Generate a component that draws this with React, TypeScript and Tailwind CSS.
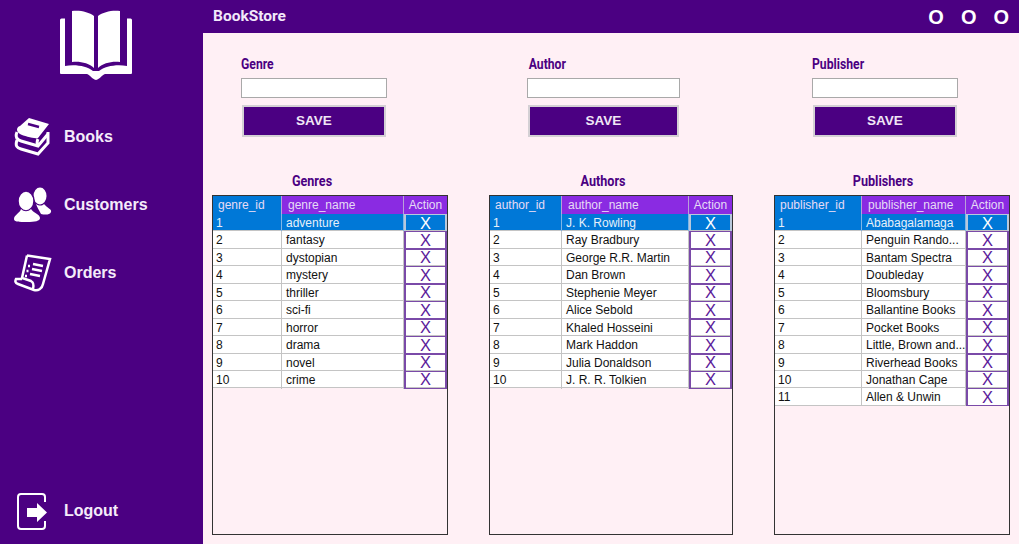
import { useState } from "react";

const genres = ["adventure", "fantasy", "dystopian", "mystery", "thriller", "sci-fi", "horror", "drama", "novel", "crime"];
const authors = ["J. K. Rowling", "Ray Bradbury", "George R.R. Martin", "Dan Brown", "Stephenie Meyer", "Alice Sebold", "Khaled Hosseini", "Mark Haddon", "Julia Donaldson", "J. R. R. Tolkien"];
const publishers = ["Ababagalamaga", "Penguin Rando...", "Bantam Spectra", "Doubleday", "Bloomsbury", "Ballantine Books", "Pocket Books", "Little, Brown and...", "Riverhead Books", "Jonathan Cape", "Allen & Unwin"];

function LogoIcon() {
  return (
    <svg width="74" height="72" viewBox="0 0 74 72" fill="white">
      <path d="M13 1 C21 0 30 2 35 6 V58 C30 53 21 51 13 52 Z" />
      <path d="M39 6 C44 2 53 0 61 1 V52 C53 51 44 53 39 58 Z" />
      <path d="M1 10 a1.5 1.5 0 0 1 1.5 -1.5 H6 V56 C16 54 28 56 34 61 H40 C46 56 58 54 68 56 V8.5 H71.5 a1.5 1.5 0 0 1 1.5 1.5 V63 a1 1 0 0 1 -1 1 H46 C43 65 41 69 37 70 C33 69 31 65 28 64 H2 a1 1 0 0 1 -1 -1 Z" />
    </svg>
  );
}

function BooksIcon() {
  return (
    <svg width="36" height="38" viewBox="0 0 36 38" fill="none">
      <path d="M15 0 L35 6 L24 20 C20 21 10 18 6 16 C2 14 2 9 6 8 Z" fill="white" />
      <path d="M14 6 L25 9" stroke="#4B0082" strokeWidth="2.5" />
      <path d="M3 14 C1 19 3 22 7 23 L24 28 L34 16 M24 21 C23 23 23 26 24 28" stroke="white" strokeWidth="3" />
      <path d="M3 22 C1 28 3 30 7 31 L24 36 L34 25 L34 14" stroke="white" strokeWidth="3" />
    </svg>
  );
}

function UsersIcon() {
  return (
    <svg width="38" height="36" viewBox="0 0 38 36" fill="white">
      <ellipse cx="26" cy="9" rx="6.5" ry="8.5" />
      <path d="M30 17 C33 21 38 22 37 25 C36 28 31 28 27 27 C25 23 23 20 22 17 C25 19 28 19 30 17 Z" />
      <ellipse cx="12" cy="14" rx="8" ry="10" stroke="#4B0082" strokeWidth="1.5" />
      <path d="M7 22 C6 26 0 28 0 32 C0 35 5 35 13 35 C21 35 26 34 26 31 C26 27 19 26 17 22 C14 25 10 25 7 22 Z" />
    </svg>
  );
}

function OrdersIcon() {
  return (
    <svg width="38" height="38" viewBox="0 0 38 38" fill="none" stroke="white" strokeWidth="2.5">
      <path d="M13 1.5 L36 5 L29 30 C28 35 24 37 20 36 L4 30 C1 29 1 27 2 25 L8 25" />
      <path d="M13 1.5 L8 24 L17 27 C19 28 20 31 19 35" />
      <path d="M14 12 h2 M19 10 l10 2 M12.5 17 h2 M18 15 l10 2 M11 22 h2 M16 20 l10 2" />
    </svg>
  );
}

function LogoutIcon() {
  return (
    <svg className="ml-[3px]" width="31" height="37" viewBox="0 0 31 37" fill="none">
      <path d="M28 9 V4 a3 3 0 0 0 -3 -3 H4 a3 3 0 0 0 -3 3 V33 a3 3 0 0 0 3 3 H25 a3 3 0 0 0 3 -3 V28" stroke="white" strokeWidth="2" />
      <path d="M10 15 H20 V10 L30 19.5 L20 29 V24 H10 Z" fill="white" />
    </svg>
  );
}

function NavItem({ icon, label, className }: { icon: React.ReactNode; label: string; className?: string }) {
  return (
    <div className={`flex items-center h-[38px] ${className ?? ""}`}>
      <div className="w-[64px] pl-[14px] flex items-center">{icon}</div>
      <span className="text-[16px] font-bold text-[#f5ecfa]">{label}</span>
    </div>
  );
}

function FormBlock({ label, width, labelOffset, className }: { label: string; width: string; labelOffset: string; className?: string }) {
  const [value, setValue] = useState("");
  return (
    <div className={`${width} ${className ?? ""}`}>
      <div className={`text-[14px] leading-[16px] font-bold text-[#4B0082] scale-x-[.87] origin-left ${labelOffset}`} style={{ fontFamily: "Roboto, sans-serif" }}>{label}</div>
      <input
        value={value}
        onChange={(e) => setValue(e.target.value)}
        className="block w-full h-[20px] mt-[6px] bg-white border border-[#a9a9a9] outline-none"
      />
      <button className="block mx-[1px] w-[calc(100%-2px)] h-[32px] mt-[7px] bg-[#4B0082] border-[2px] border-[#d4d0d4] text-[13.5px] font-bold text-[#f0e6f5]">
        SAVE
      </button>
    </div>
  );
}

function DataTable({ title, rows, idHeader, nameHeader, cols, width, titleOffset, className }: {
  title: string; rows: string[]; idHeader: string; nameHeader: string; cols: string; width: string; titleOffset: string; className?: string;
}) {
  return (
    <div className={`${width} ${className ?? ""}`}>
      <div className={titleOffset}>
        <div className="text-center text-[14px] leading-[16px] font-bold text-[#4B0082] mb-[6px] scale-x-[.9]" style={{ fontFamily: "Roboto, sans-serif" }}>{title}</div>
      </div>
      <div className="h-[340px] border border-[#333] text-[#111]">
        <div className={`grid ${cols} h-[18px] leading-[18px] text-[12px] text-[#e6dcf5]`}>
          <div className="bg-[#0078D7] pl-[5px] border-r border-[#b9a0d8]">{idHeader}</div>
          <div className="bg-[#8A2BE2] pl-[6px] border-r border-[#b9a0d8]">{nameHeader}</div>
          <div className="bg-[#8A2BE2] text-center">Action</div>
        </div>
        {rows.map((name, i) => {
          const selected = i === 0;
          return (
            <div
              key={name}
              className={`grid ${cols} h-[17.45px] leading-[18px] text-[12px] border-b border-[#c4c4c4] ${selected ? "bg-[#0078D7] text-[#e6f0fa]" : "bg-white"}`}
            >
              <div className={`pl-[3px] border-r ${selected ? "border-[#7fb5e6]" : "border-[#c4c4c4]"}`}>{i + 1}</div>
              <div className={`pl-[4px] border-r whitespace-nowrap ${selected ? "border-[#7fb5e6]" : "border-[#c4c4c4]"}`}>{name}</div>
              <button className={`border-x-2 border-y text-[16.5px] leading-[15px] font-normal overflow-hidden ${selected ? "border-[#b8c8dc] text-white" : "border-[#7a4aa8] text-[#5b1a9a]"}`}>X</button>
            </div>
          );
        })}
      </div>
    </div>
  );
}

export default function App() {
  return (
    <div className="flex w-[1019px] h-[544px] overflow-hidden bg-[#4B0082]" style={{ fontFamily: '"Liberation Sans", Arial, sans-serif' }}>
      <aside className="w-[203px] shrink-0 flex flex-col">
        <div className="flex justify-center pt-[10px] mr-[11px]"><LogoIcon /></div>
        <nav className="flex flex-col">
          <NavItem className="mt-[36px]" icon={<BooksIcon />} label="Books" />
          <NavItem className="mt-[30px]" icon={<UsersIcon />} label="Customers" />
          <NavItem className="mt-[30px]" icon={<OrdersIcon />} label="Orders" />
        </nav>
        <NavItem className="mt-auto mb-[14px]" icon={<LogoutIcon />} label="Logout" />
      </aside>
      <div className="flex-1 flex flex-col min-w-0">
        <header className="h-[33px] shrink-0 flex items-center justify-between pl-[10px] pr-[10px]">
          <span className="text-[15.5px] font-bold text-[#f2e8fa]" style={{ fontFamily: "Roboto, sans-serif" }}>BookStore</span>
          <div className="flex gap-[17px] text-[20px] font-bold text-white">
            <span>O</span>
            <span>O</span>
            <span>O</span>
          </div>
        </header>
        <main className="flex-1 bg-[#FFF0F5]">
          <div className="flex pl-[38px] pt-[23px]">
            <FormBlock label="Genre" width="w-[146px]" labelOffset="" />
            <FormBlock label="Author" width="w-[153px]" labelOffset="pl-[2px]" className="ml-[140px]" />
            <FormBlock label="Publisher" width="w-[146px]" labelOffset="" className="ml-[132px]" />
          </div>
          <div className="flex pl-[9px] mt-[36px]">
            <DataTable title="Genres" titleOffset="pr-[36px]" rows={genres} idHeader="genre_id" nameHeader="genre_name" cols="grid-cols-[69px_122px_1fr]" width="w-[236px]" />
            <DataTable title="Authors" titleOffset="pr-[16px]" rows={authors} idHeader="author_id" nameHeader="author_name" cols="grid-cols-[72px_127px_1fr]" width="w-[244px]" className="ml-[41px]" />
            <DataTable title="Publishers" titleOffset="pr-[18px]" rows={publishers} idHeader="publisher_id" nameHeader="publisher_name" cols="grid-cols-[87px_104px_1fr]" width="w-[236px]" className="ml-[41px]" />
          </div>
        </main>
      </div>
    </div>
  );
}
